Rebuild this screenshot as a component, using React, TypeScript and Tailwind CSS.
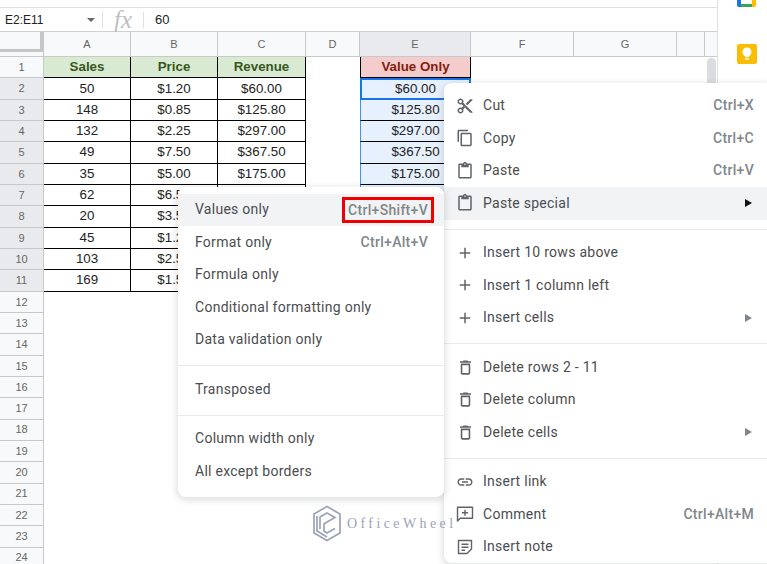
import type { ReactNode } from "react";
import {
  MdAdd,
  MdContentCut,
  MdLink,
  MdOutlineContentCopy,
  MdOutlineContentPaste,
  MdOutlineDelete,
} from "react-icons/md";

const headerCols = [
  { label: "A", width: "w-[87px]" },
  { label: "B", width: "w-[87px]" },
  { label: "C", width: "w-[88px]" },
  { label: "D", width: "w-[54px]" },
  { label: "E", width: "w-[111px]", active: true },
  { label: "F", width: "w-[103px]" },
  { label: "G", width: "w-[103px]" },
  { label: "", width: "w-[28px]" },
];

// rows 7 to 11 sit behind the submenu, so revenue and value stay empty there
const tableRows = [
  ["50", "$1.20", "$60.00", "$60.00"],
  ["148", "$0.85", "$125.80", "$125.80"],
  ["132", "$2.25", "$297.00", "$297.00"],
  ["49", "$7.50", "$367.50", "$367.50"],
  ["35", "$5.00", "$175.00", "$175.00"],
  ["62", "$6.50", "", ""],
  ["20", "$3.50", "", ""],
  ["45", "$1.25", "", ""],
  ["103", "$2.50", "", ""],
  ["169", "$1.50", "", ""],
];

const emptyRows = [12, 13, 14, 15, 16, 17, 18, 19, 20, 21, 22, 23, 24];

const Arrow = ({ dark }: { dark?: boolean }) => (
  <svg width="7" height="8" viewBox="0 0 7 8" className="mr-[2px]">
    <polygon points="0,0 7,4 0,8" fill={dark ? "#111111" : "#80868b"} />
  </svg>
);

const CommentIcon = () => (
  <svg width="18" height="18" viewBox="0 0 18 18" fill="none" stroke="#5f6368" strokeWidth="1.4">
    <path d="M1.5 16V2.2h15v11H4.2z" strokeLinejoin="round" />
    <path d="M9 4.8v6M6 7.8h6" />
  </svg>
);

const NoteIcon = () => (
  <svg width="18" height="18" viewBox="0 0 18 18" fill="none" stroke="#5f6368" strokeWidth="1.4">
    <path d="M2.5 2.5h13v8.5l-4.5 4.5H2.5z" strokeLinejoin="round" />
    <path d="M5.5 6.3h7M5.5 9.3h7M5.5 12.2h3.5" />
  </svg>
);

const iconClass = "text-[18px] text-[#5f6368]";
const trashClass = "text-[19px] text-[#5f6368]";

const MenuRow = ({
  icon,
  label,
  shortcut,
  submenu,
  active,
}: {
  icon: ReactNode;
  label: string;
  shortcut?: string;
  submenu?: boolean;
  active?: boolean;
}) => (
  <div className={`flex h-[32.5px] items-center pl-[12px] pr-[20px] ${active ? "bg-[#f1f3f4]" : ""}`}>
    <div className="flex w-[27px] shrink-0 items-center">{icon}</div>
    <span className="flex-1 text-[14px] tracking-[0.27px] text-[#4a4d51]">{label}</span>
    {shortcut && <span className="text-[14px] font-medium tracking-[0.3px] text-[#80868b]">{shortcut}</span>}
    {submenu && <Arrow dark={active} />}
  </div>
);

const SubRow = ({ label, shortcut }: { label: string; shortcut?: string }) => (
  <div className="flex h-[32.5px] items-center justify-between pl-[17px] pr-[16px]">
    <span className="text-[14px] tracking-[0.27px] text-[#4a4d51]">{label}</span>
    {shortcut && <span className="text-[14px] font-medium tracking-[0.3px] text-[#80868b]">{shortcut}</span>}
  </div>
);

const Watermark = () => (
  <div className="absolute left-[312px] top-[505px] flex items-center gap-[5px]">
    <svg width="30" height="37" viewBox="0 0 30 37" fill="none" stroke="#9aa3b8" strokeWidth="1.7">
      <path d="M15 1.5l13 7.5v19l-13 7.5L2 28V9z" />
      <path d="M8 24V12l7-4 8 4.5-8 4.5-3 2v7l3 2 8-4.5" />
      <path d="M5 11v15l10 6" />
    </svg>
    <span className="font-['Liberation_Serif',serif] text-[14px] tracking-[3.4px] text-[#9aa3b8]">OfficeWheel</span>
  </div>
);

export default function App() {
  return (
    <div className="relative flex h-[564px] w-[767px] overflow-hidden bg-white font-['Roboto',sans-serif]">
      <div className="w-[717px] shrink-0">
        <div className="h-[8px] border-b border-[#e0e0e0]" />
        {/* formula bar */}
        <div className="flex h-[24px] items-center border-b border-[#d0d0d0] font-['Liberation_Sans',sans-serif] text-[13px] text-[#222222]">
          <span className="w-[87px] pl-[5px] text-[12px]">E2:E11</span>
          <svg width="8" height="4" viewBox="0 0 8 4">
            <polygon points="0,0 8,0 4,4" fill="#666666" />
          </svg>
          <div className="ml-[7px] h-[16px] w-px bg-[#e0e0e0]" />
          <span className="ml-[11px] w-[29px] font-['Liberation_Serif',serif] text-[25px] italic leading-none text-[#c0c0c0]">fx</span>
          <div className="h-[16px] w-px bg-[#e0e0e0]" />
          <span className="ml-[11px]">60</span>
        </div>

        {/* column headers */}
        <div className="flex h-[25px] font-['Liberation_Sans',sans-serif] text-[11px] text-[#666666]">
          <div className="h-full w-[44px] border-b border-r border-[#c8c8c8] bg-[#f8f9fa]">
            <div className="h-[20px] w-[43px] border-b-[3px] border-r-[3px] border-[#c4c7c5]" />
          </div>
          {headerCols.map((col) => (
            <div
              key={col.label || "rest"}
              className={`flex items-center justify-center border-b border-r border-[#c8c8c8] ${col.width} ${col.active ? "bg-[#e8eaed]" : "bg-[#f8f9fa]"}`}
            >
              {col.label}
            </div>
          ))}
          <div className="w-[12px] border-b border-[#c8c8c8] bg-[#f8f9fa]" />
        </div>

        <div className="flex font-['Liberation_Sans',sans-serif] text-[13.33px] text-[#222222]">
          <div className="w-[705px]">
            {/* header row of the data */}
            <div className="flex h-[21.33px]">
              <div className="flex w-[44px] items-center justify-center border-b border-r border-[#c8c8c8] bg-[#f8f9fa] text-[11px] text-[#666666]">1</div>
              {["Sales", "Price", "Revenue"].map((title, i) => (
                <div
                  key={title}
                  className={`flex items-center justify-center border-b border-r border-black bg-[#d9ead3] font-bold text-[#38571a] ${i === 2 ? "w-[88px]" : "w-[87px]"}`}
                >
                  {title}
                </div>
              ))}
              <div className="w-[54px]" />
              <div className="flex w-[111px] items-center justify-center border-b border-l border-r border-black bg-[#f4cccc] font-bold text-[#85200c]">Value Only</div>
            </div>

            {tableRows.map((row, i) => (
              <div key={i} className="flex h-[21.33px]">
                <div className="flex w-[44px] items-center justify-center border-b border-r border-[#c8c8c8] bg-[#e8eaed] text-[11px] text-[#666666]">{i + 2}</div>
                <div className="flex w-[87px] items-center justify-center border-b border-r border-black">{row[0]}</div>
                <div className="flex w-[87px] items-center justify-center border-b border-r border-black">{row[1]}</div>
                <div className="flex w-[88px] items-center justify-center border-b border-r border-black">{row[2]}</div>
                <div className="w-[54px]" />
                <div
                  className={`flex w-[111px] items-center justify-center bg-[#e7f0fd] ${
                    i === 0 ? "border-2 border-[#1a73e8]" : "border-b border-l border-r border-b-black border-l-[#4a8cf0] border-r-[#4a8cf0]"
                  }`}
                >
                  {row[3]}
                </div>
              </div>
            ))}

            {emptyRows.map((n) => (
              <div key={n} className="flex h-[21.33px]">
                <div className="flex w-[44px] items-center justify-center border-b border-r border-[#c8c8c8] bg-[#f8f9fa] text-[11px] text-[#666666]">{n}</div>
              </div>
            ))}
          </div>
          {/* scrollbar */}
          <div className="w-[12px] pl-[2px] pt-[1px]">
            <div className="h-[120px] w-[9px] rounded-full bg-[#dadce0]" />
          </div>
        </div>
      </div>

      {/* side panel */}
      <div className="flex flex-1 flex-col items-center border-l border-[#e0e0e0] pl-[8px]">
        <div className="flex h-[7px] w-[19px] overflow-hidden rounded-b-[2px]">
          <div className="h-full w-[4px] bg-[#1a73e8]" />
          <div className="flex h-full flex-1 flex-col">
            <div className="h-[4px] bg-white" />
            <div className="h-[3px] bg-[#34a853]" />
          </div>
          <div className="h-full w-[4px] bg-[#fbbc04]" />
        </div>
        <div className="mt-[37px] flex h-[20px] w-[20px] items-center justify-center rounded-[2px] bg-[#fbbc04]">
          <svg width="10" height="14" viewBox="0 0 10 14">
            <circle cx="5" cy="5" r="4.5" fill="white" />
            <rect x="3" y="8" width="4" height="2" fill="white" />
            <rect x="3" y="11" width="4" height="1.5" fill="white" />
          </svg>
        </div>
      </div>

      {/* main context menu */}
      <div className="absolute left-[444px] top-[83px] w-[330px] rounded-lg bg-white pt-[6.5px] shadow-[0_2px_6px_2px_rgba(60,64,67,0.15)]">
        <MenuRow icon={<MdContentCut className={iconClass} />} label="Cut" shortcut="Ctrl+X" />
        <MenuRow icon={<MdOutlineContentCopy className={iconClass} />} label="Copy" shortcut="Ctrl+C" />
        <MenuRow icon={<MdOutlineContentPaste className={iconClass} />} label="Paste" shortcut="Ctrl+V" />
        <MenuRow icon={<MdOutlineContentPaste className={iconClass} />} label="Paste special" submenu active />
        <div className="mb-[7px] mt-[9px] h-px bg-[#e8eaed]" />
        <MenuRow icon={<MdAdd className={iconClass} />} label="Insert 10 rows above" />
        <MenuRow icon={<MdAdd className={iconClass} />} label="Insert 1 column left" />
        <MenuRow icon={<MdAdd className={iconClass} />} label="Insert cells" submenu />
        <div className="mb-[7px] mt-[9px] h-px bg-[#e8eaed]" />
        <MenuRow icon={<MdOutlineDelete className={trashClass} />} label="Delete rows 2 - 11" />
        <MenuRow icon={<MdOutlineDelete className={trashClass} />} label="Delete column" />
        <MenuRow icon={<MdOutlineDelete className={trashClass} />} label="Delete cells" submenu />
        <div className="mb-[7px] mt-[9px] h-px bg-[#e8eaed]" />
        <MenuRow icon={<MdLink className={iconClass} />} label="Insert link" />
        <MenuRow icon={<CommentIcon />} label="Comment" shortcut="Ctrl+Alt+M" />
        <MenuRow icon={<NoteIcon />} label="Insert note" />
      </div>

      {/* paste special submenu */}
      <div className="absolute left-[178px] top-[187px] w-[266px] rounded-lg bg-white pb-[9px] pt-[6.5px] shadow-[0_2px_6px_2px_rgba(60,64,67,0.15)]">
        <div className="flex h-[32.5px] items-center justify-between bg-[#f1f3f4] pl-[17px] pr-[10px]">
          <span className="text-[14px] tracking-[0.27px] text-[#4a4d51]">Values only</span>
          <span className="border-[3px] border-[#f00000] px-[3px] py-[2px] text-[14px] font-medium leading-[16px] tracking-[0.3px] text-[#80868b]">Ctrl+Shift+V</span>
        </div>
        <SubRow label="Format only" shortcut="Ctrl+Alt+V" />
        <SubRow label="Formula only" />
        <SubRow label="Conditional formatting only" />
        <SubRow label="Data validation only" />
        <div className="mb-[7px] mt-[9px] h-px bg-[#e8eaed]" />
        <SubRow label="Transposed" />
        <div className="mb-[7px] mt-[9px] h-px bg-[#e8eaed]" />
        <SubRow label="Column width only" />
        <SubRow label="All except borders" />
      </div>

      <Watermark />
    </div>
  );
}
